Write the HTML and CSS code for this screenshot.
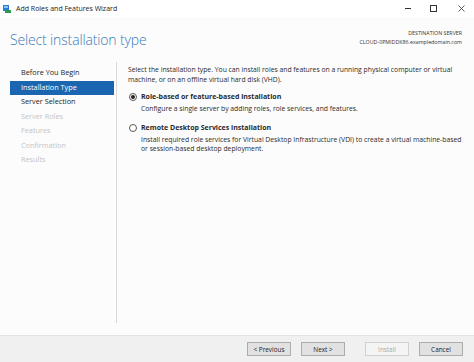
FILE: index.html
```html
<!DOCTYPE html>
<html lang="en">
<head>
    <meta charset="UTF-8">
    <title>Add Roles and Features Wizard</title>
    <link rel="stylesheet" href="styles.css">
</head>
<body>
    <div class="window">
        <div class="titlebar">
            <svg class="app-icon" width="8" height="8" viewBox="0 0 8 8">
                <rect x="0" y="0" width="6" height="6" fill="#2b7bd1"/>
                <rect x="1" y="1" width="4" height="2" fill="#8cc4f0"/>
                <rect x="2" y="5" width="6" height="3" fill="#2c9c4a"/>
            </svg>
            <span class="title">Add Roles and Features Wizard</span>
            <div class="controls">
                <span class="ctl-min"></span>
                <span class="ctl-max"></span>
                <svg class="ctl-close" width="7" height="7" viewBox="0 0 7 7">
                    <path d="M0.5 0.5 L6.5 6.5 M6.5 0.5 L0.5 6.5" stroke="#333" stroke-width="0.8"/>
                </svg>
            </div>
        </div>

        <div class="header">
            <h1>Select installation type</h1>
            <div class="dest">
                <div>DESTINATION SERVER</div>
                <div>CLOUD-0PMIDDK86.exampledomain.com</div>
            </div>
        </div>

        <div class="main">
            <ul class="nav">
                <li>Before You Begin</li>
                <li class="active">Installation Type</li>
                <li>Server Selection</li>
                <li class="disabled">Server Roles</li>
                <li class="disabled">Features</li>
                <li class="disabled">Confirmation</li>
                <li class="disabled">Results</li>
            </ul>
            <div class="content">
                <p class="intro">Select the installation type. You can install roles and features on a running physical computer or virtual machine, or on an offline virtual hard disk (VHD).</p>

                <div class="option">
                    <span class="radio checked"></span>
                    <div>
                        <div class="opt-title">Role-based or feature-based installation</div>
                        <div class="opt-desc">Configure a single server by adding roles, role services, and features.</div>
                    </div>
                </div>

                <div class="option">
                    <span class="radio"></span>
                    <div>
                        <div class="opt-title">Remote Desktop Services installation</div>
                        <div class="opt-desc">Install required role services for Virtual Desktop Infrastructure (VDI) to create a virtual machine-based or session-based desktop deployment.</div>
                    </div>
                </div>
            </div>
        </div>

        <div class="footer">
            <button class="btn">&lt; Previous</button>
            <button class="btn">Next &gt;</button>
            <button class="btn btn-disabled install">Install</button>
            <button class="btn">Cancel</button>
        </div>
    </div>
</body>
</html>
```

FILE: styles.css
```css
* {
    box-sizing: border-box;
}
body {
    margin: 0;
    font-family: 'Open Sans', 'Noto Sans', sans-serif;
    color: #1e1e1e;
    background: #fcfcfc;
}
.window {
    width: 474px;
    height: 362px;
    display: flex;
    flex-direction: column;
    background: #fcfcfc;
}
.titlebar {
    height: 17px;
    display: flex;
    align-items: center;
    padding-left: 3px;
    background: #fff;
    font-size: 7px;
}
.app-icon {
    margin-right: 5px;
}
.title {
    color: #222;
}
.controls {
    margin-left: auto;
    display: flex;
    align-items: center;
}
.ctl-min {
    width: 6px;
    height: 1px;
    background: #333;
    margin-right: 19px;
}
.ctl-max {
    width: 7px;
    height: 7px;
    border: 1px solid #333;
    margin-right: 21px;
}
.ctl-close {
    margin-right: 9px;
}
.header {
    height: 45px;
    display: flex;
    justify-content: space-between;
    padding: 0 12px 0 10px;
}
h1 {
    margin: 13px 0 0;
    font-size: 14px;
    font-weight: 300;
    color: #3a7ab8;
    letter-spacing: -0.15px;
}
.dest {
    margin-top: 12px;
    text-align: right;
    font-size: 5.3px;
    line-height: 8.5px;
    color: #333;
}
.main {
    flex: 1;
    display: flex;
    padding-bottom: 12px;
}
.nav {
    list-style: none;
    margin: 0;
    padding: 4px 2px 0 10px;
    width: 117px;
    border-right: 1px solid #d8d8d8;
    font-size: 7.3px;
}
.nav li {
    height: 14.5px;
    line-height: 13px;
    padding-left: 11px;
    color: #222;
}
.nav li.active {
    background: #1a66b0;
    color: #fff;
}
.nav li.disabled {
    color: #c4c4c4;
}
.content {
    flex: 1;
    padding: 3px 4px 0 11px;
    font-size: 6.8px;
    line-height: 9.5px;
    color: #2a2a2a;
}
.intro {
    margin: 0 0 8px;
    padding-right: 6px;
}
.option {
    display: flex;
    align-items: flex-start;
    margin-bottom: 10px;
    padding-left: 1px;
}
.radio {
    width: 8px;
    height: 8px;
    border: 1px solid #5a5a5a;
    border-radius: 50%;
    margin: 1px 4px 0 0;
    flex-shrink: 0;
    background: #fff;
    display: flex;
    align-items: center;
    justify-content: center;
}
.radio.checked::after {
    content: '';
    width: 4px;
    height: 4px;
    border-radius: 50%;
    background: #222;
}
.opt-title {
    font-weight: bold;
    font-size: 7px;
    margin-bottom: 2px;
}
.footer {
    height: 27px;
    background: #f0f0f0;
    border-top: 1px solid #e3e3e3;
    display: flex;
    align-items: center;
    justify-content: flex-end;
    padding: 0 11px 0 0;
    gap: 10px;
}
.btn {
    width: 44px;
    height: 14px;
    padding: 0;
    font-family: inherit;
    font-size: 6.4px;
    color: #222;
    background: #e1e1e1;
    border: 1px solid #adadad;
}
.btn.install {
    margin-left: 10px;
}
.btn-disabled {
    color: #a8a8a8;
    background: #f4f4f4;
    border-color: #d0d0d0;
}
```
